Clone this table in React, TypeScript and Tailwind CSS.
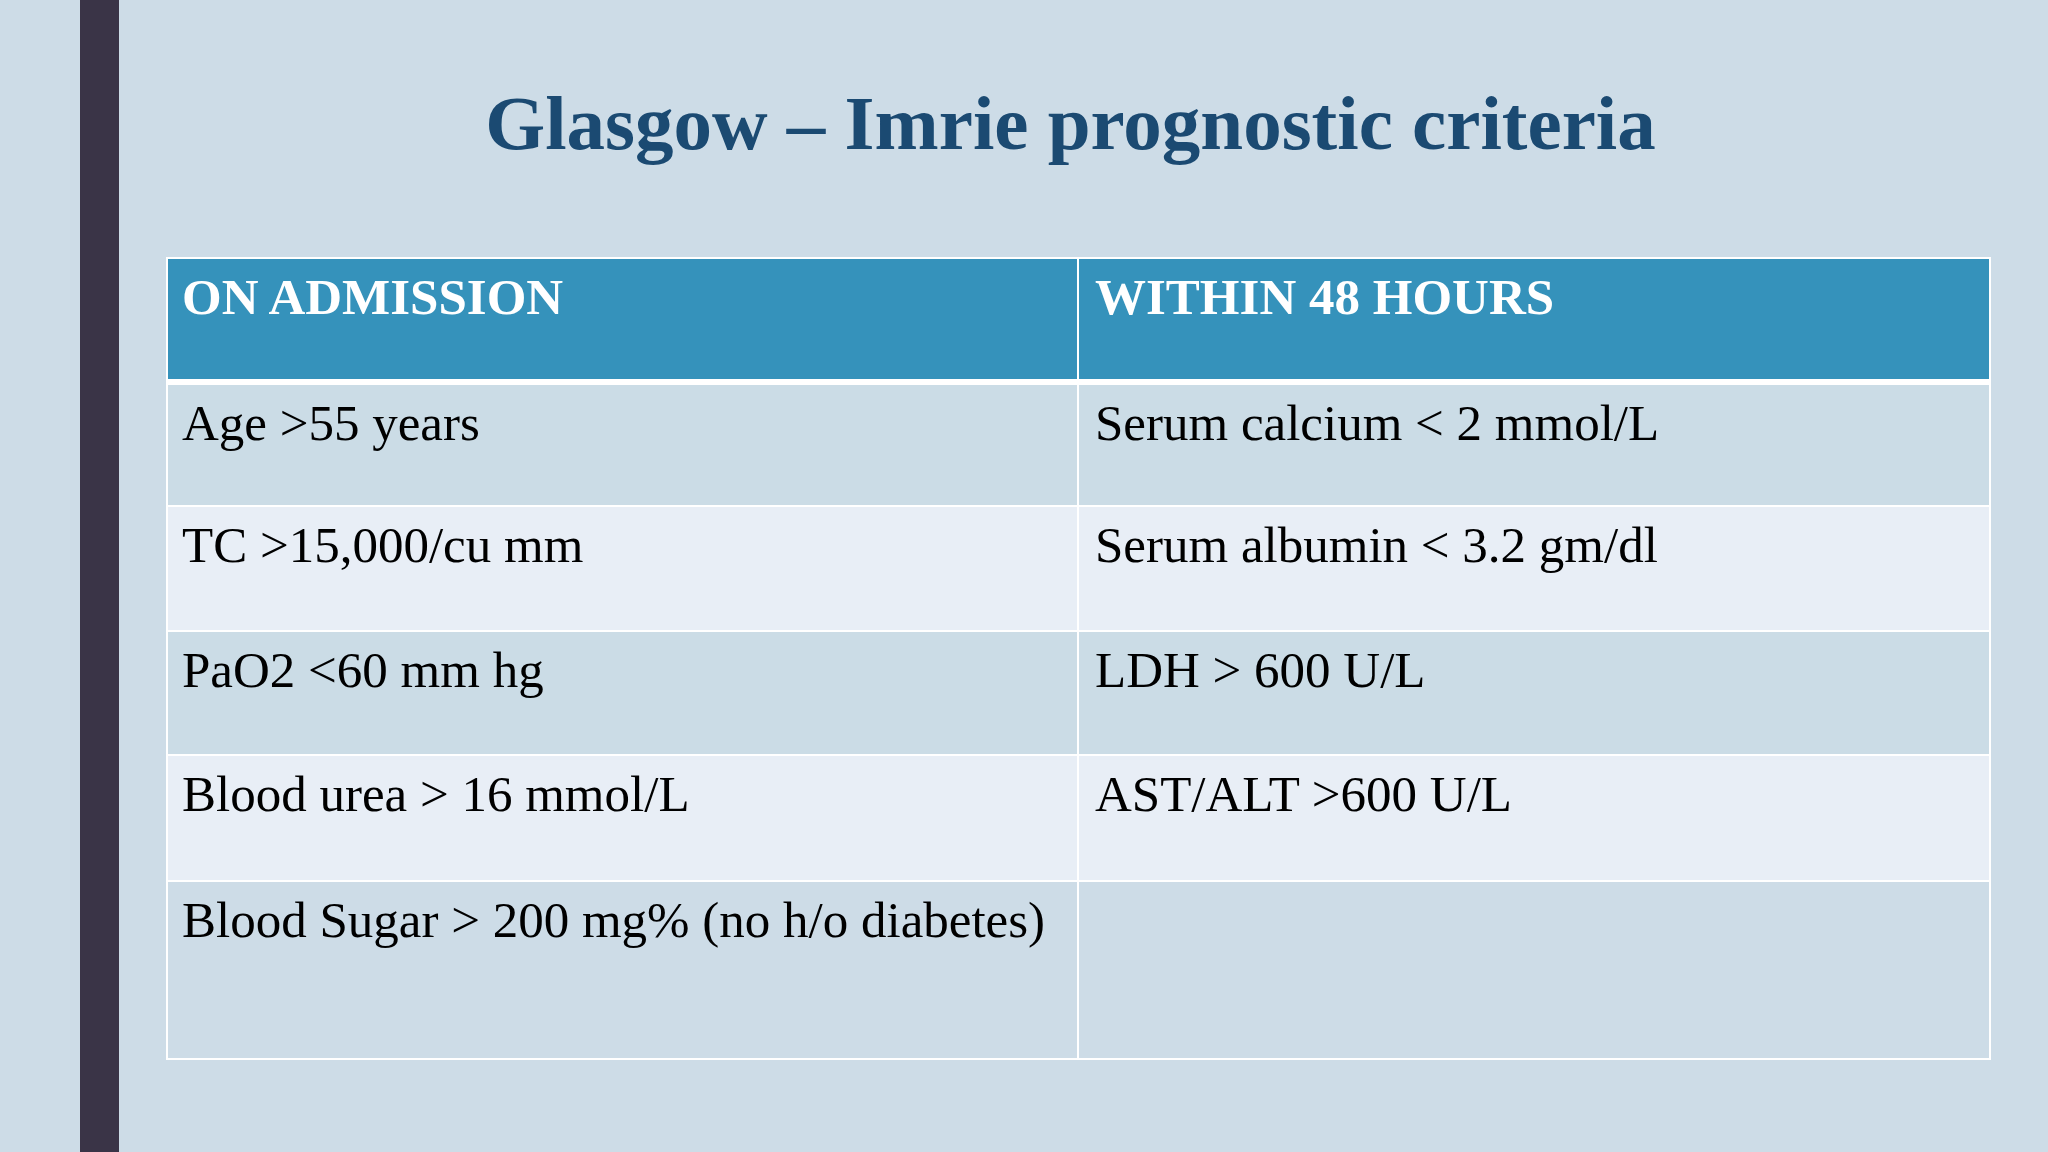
const rows = [
  { left: 'Age >55 years', right: 'Serum calcium < 2 mmol/L', h: 'h-[122px]', bg: 'bg-[#cbdce6]' },
  { left: 'TC >15,000/cu mm', right: 'Serum albumin < 3.2 gm/dl', h: 'h-[125px]', bg: 'bg-[#e8eef6]' },
  { left: 'PaO2 <60 mm hg', right: 'LDH > 600 U/L', h: 'h-[124px]', bg: 'bg-[#cbdce6]' },
  { left: 'Blood urea > 16 mmol/L', right: 'AST/ALT >600 U/L', h: 'h-[126px]', bg: 'bg-[#e8eef6]' },
  { left: 'Blood Sugar > 200 mg% (no h/o diabetes)', right: '', h: 'h-[176px]', bg: 'bg-[#cddce7]' },
];

export default function App() {
  return (
    <div
      className="flex h-[1152px] w-[2048px] overflow-hidden bg-[#cddce7]"
      style={{ fontFamily: '"Liberation Serif", "Times New Roman", serif' }}
    >
      <div className="w-[80px] shrink-0" />
      <div className="w-[39px] shrink-0 bg-[#3a3447]" />
      <div className="flex w-[1825px] shrink-0 flex-col pl-[47px] box-content">
        <h1 className="mt-[77px] pr-[16px] text-center text-[77px] font-bold leading-[92px] text-[#1b4a72]">
          Glasgow – Imrie prognostic criteria
        </h1>

        <div className="mt-[88px] border-2 border-white">
          <div className="flex h-[126px] border-b-[6px] border-white bg-[#3592bb] text-[51px] font-bold leading-[60px] text-white">
            <div className="w-[911px] border-r-2 border-white px-[14px] pt-[8px]">ON ADMISSION</div>
            <div className="flex-1 px-[16px] pt-[8px]">WITHIN 48 HOURS</div>
          </div>
          {rows.map((r, i) => (
            <div
              key={i}
              className={`flex ${r.h} ${r.bg} text-[51px] leading-[60px] text-black ${i < rows.length - 1 ? 'border-b-2 border-white' : ''}`}
            >
              <div className="w-[911px] whitespace-nowrap border-r-2 border-white px-[14px] pt-[8px]">{r.left}</div>
              <div className="flex-1 whitespace-nowrap px-[16px] pt-[8px]">{r.right}</div>
            </div>
          ))}
        </div>
      </div>
    </div>
  );
}
